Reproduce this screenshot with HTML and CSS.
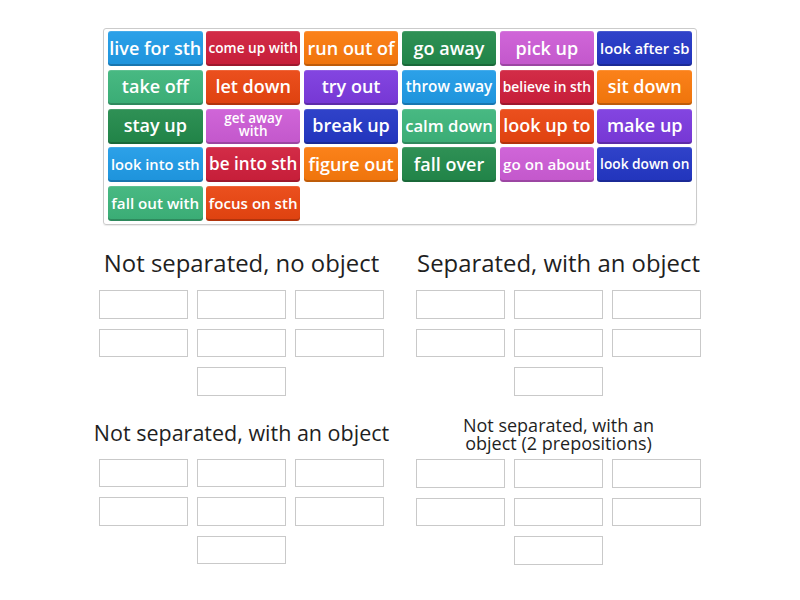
FILE: index.html
```html
<!DOCTYPE html>
<html lang="en">
<head>
<meta charset="utf-8">
<title>Group sort</title>
<link rel="stylesheet" href="styles.css">
</head>
<body>
<div class="page">
  <div class="bank">
    <div class="tile blue fs18">live for sth</div>
    <div class="tile red fs137">come up with</div>
    <div class="tile orange fs18">run out of</div>
    <div class="tile dgreen fs18">go away</div>
    <div class="tile pink fs18">pick up</div>
    <div class="tile navy fs148">look after sb</div>

    <div class="tile teal fs18">take off</div>
    <div class="tile rorange fs18">let down</div>
    <div class="tile purple fs18">try out</div>
    <div class="tile blue fs153">throw away</div>
    <div class="tile red fs138">believe in sth</div>
    <div class="tile orange fs18">sit down</div>

    <div class="tile dgreen fs18">stay up</div>
    <div class="tile pink two">get away<br>with</div>
    <div class="tile navy fs18">break up</div>
    <div class="tile teal fs167">calm down</div>
    <div class="tile rorange fs18">look up to</div>
    <div class="tile purple fs18">make up</div>

    <div class="tile blue fs147">look into sth</div>
    <div class="tile red fs171">be into sth</div>
    <div class="tile orange fs18">figure out</div>
    <div class="tile dgreen fs18">fall over</div>
    <div class="tile pink fs152">go on about</div>
    <div class="tile navy fs137">look down on</div>

    <div class="tile teal fs152">fall out with</div>
    <div class="tile rorange fs151">focus on sth</div>
  </div>

  <div class="groups">
    <section class="group">
      <h2 class="title">Not separated, no object</h2>
      <div class="slots">
        <div class="slot"></div><div class="slot"></div><div class="slot"></div>
        <div class="slot"></div><div class="slot"></div><div class="slot"></div>
        <div class="slot mid"></div>
      </div>
    </section>
    <section class="group">
      <h2 class="title">Separated, with an object</h2>
      <div class="slots">
        <div class="slot"></div><div class="slot"></div><div class="slot"></div>
        <div class="slot"></div><div class="slot"></div><div class="slot"></div>
        <div class="slot mid"></div>
      </div>
    </section>
    <section class="group">
      <h2 class="title fit">Not separated, with an object</h2>
      <div class="slots">
        <div class="slot"></div><div class="slot"></div><div class="slot"></div>
        <div class="slot"></div><div class="slot"></div><div class="slot"></div>
        <div class="slot mid"></div>
      </div>
    </section>
    <section class="group">
      <h2 class="title small">Not separated, with an<br>object (2 prepositions)</h2>
      <div class="slots">
        <div class="slot"></div><div class="slot"></div><div class="slot"></div>
        <div class="slot"></div><div class="slot"></div><div class="slot"></div>
        <div class="slot mid"></div>
      </div>
    </section>
  </div>
</div>
</body>
</html>
```

FILE: styles.css
```css
* { box-sizing: border-box; }

html, body {
  margin: 0;
  padding: 0;
  background: #ffffff;
}

body {
  font-family: "Open Sans", "Liberation Sans", sans-serif;
  color: #222222;
}

.page {
  width: 800px;
  height: 600px;
  padding-top: 27.5px;
}

.bank {
  width: 594px;
  height: 197px;
  margin-left: 103px;
  border: 1px solid #cbcbcb;
  border-radius: 3px;
  box-shadow: 0 1px 1px rgba(0, 0, 0, 0.08);
  padding: 2.5px 4px 2px 4px;
  display: grid;
  grid-template-columns: repeat(6, 94.6px);
  grid-auto-rows: 35px;
  column-gap: 3.3px;
  row-gap: 3.8px;
}

.tile {
  display: flex;
  align-items: center;
  justify-content: center;
  text-align: center;
  white-space: nowrap;
  color: #ffffff;
  font-weight: 600;
  border-radius: 3px;
  padding: 0 2px 2px;
  box-shadow: inset 0 -2px 0 rgba(0, 0, 0, 0.2), inset 0 1px 0 rgba(255, 255, 255, 0.12);
  background-image: linear-gradient(rgba(255, 255, 255, 0.06), rgba(0, 0, 0, 0.05));
}

.fs137 { font-size: 13.7px; }
.fs138 { font-size: 13.8px; }
.fs147 { font-size: 14.7px; }
.fs148 { font-size: 14.8px; }
.fs151 { font-size: 15.1px; }
.fs152 { font-size: 15.2px; }
.fs153 { font-size: 15.3px; }
.fs167 { font-size: 16.7px; }
.fs171 { font-size: 17.1px; }
.fs18 { font-size: 18px; }

.tile.two {
  font-size: 13.5px;
  line-height: 13px;
  white-space: normal;
}

.blue { background-color: #1f9be7; }
.red { background-color: #d01f3c; }
.orange { background-color: #fb7a0c; }
.dgreen { background-color: #228a4b; }
.pink { background-color: #cd5cd6; }
.navy { background-color: #2337c6; }
.teal { background-color: #3db57b; }
.rorange { background-color: #ea4510; }
.purple { background-color: #7c3adf; }

.groups {
  width: 634px;
  margin: 23px 0 0 83px;
  display: grid;
  grid-template-columns: 317px 317px;
  row-gap: 22.9px;
}

.group {
  display: flex;
  flex-direction: column;
  align-items: center;
}

.title {
  margin: 0;
  height: 42.5px;
  font-size: 23.9px;
  font-weight: 400;
  line-height: 30px;
  text-align: center;
  white-space: nowrap;
  color: #1f1f1f;
}

.title.fit {
  font-size: 21.5px;
  height: 40.6px;
}

.title.small {
  font-size: 18px;
  line-height: 18.5px;
  margin-top: -2.9px;
  height: 43.5px;
}

.slots {
  display: grid;
  grid-template-columns: repeat(3, 88.8px);
  grid-auto-rows: 28.5px;
  column-gap: 9.2px;
  row-gap: 10px;
}

.slot {
  border: 1px solid #c9c9c9;
  background: #ffffff;
}

.slot.mid {
  grid-column: 2;
}
```
